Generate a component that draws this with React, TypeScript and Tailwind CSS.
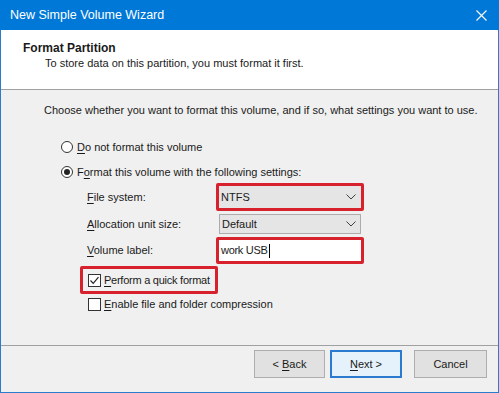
import React from "react";

const font = { fontFamily: '"Liberation Sans", Arial, sans-serif' };

function U({ children }: { children: React.ReactNode }) {
  return <span className="underline underline-offset-2 decoration-1">{children}</span>;
}

function Chevron() {
  return (
    <svg width="10" height="6" viewBox="0 0 10 6" className="shrink-0">
      <path d="M0.5 0.5 L5 5 L9.5 0.5" fill="none" stroke="#404040" strokeWidth="1" />
    </svg>
  );
}

function Radio({ checked }: { checked?: boolean }) {
  return (
    <div className="flex h-[12px] w-[12px] shrink-0 items-center justify-center rounded-full border border-[#333] bg-white">
      {checked ? <div className="h-[6px] w-[6px] rounded-full bg-[#222]" /> : null}
    </div>
  );
}

function Check({ checked }: { checked?: boolean }) {
  return (
    <div className="flex h-[13px] w-[13px] shrink-0 items-center justify-center border border-[#333] bg-white">
      {checked ? (
        <svg width="11" height="11" viewBox="0 0 11 11">
          <path d="M1.5 5.5 L4.2 8.3 L9.5 2.2" fill="none" stroke="#222" strokeWidth="1.2" />
        </svg>
      ) : null}
    </div>
  );
}

export default function App() {
  return (
    <div
      className="flex h-[393px] w-[499px] flex-col border border-t-0 border-[#2b7ccd] bg-[#f0f0f0] text-[11px] text-[#1a1a1a]"
      style={font}
    >
      {/* title bar */}
      <div className="-mx-px flex h-[30px] shrink-0 items-center justify-between bg-[#0078d7] pl-[10px] pr-[12px] text-white">
        <span className="text-[12.5px]">New Simple Volume Wizard</span>
        <svg width="11" height="11" viewBox="0 0 11 11">
          <path d="M0.5 0.5 L10.5 10.5 M10.5 0.5 L0.5 10.5" stroke="white" strokeWidth="1.1" />
        </svg>
      </div>

      {/* header */}
      <div className="flex h-[60px] shrink-0 flex-col border-b border-[#a0a0a0] bg-white pl-[22px] pt-[10px]">
        <div className="text-[12px] font-bold leading-[16px]">Format Partition</div>
        <div className="pl-[22px] leading-[15px]">To store data on this partition, you must format it first.</div>
      </div>

      {/* body */}
      <div className="flex flex-1 flex-col pl-[43px] pt-[12px]">
        <div className="leading-[16px]">
          Choose whether you want to format this volume, and if so, what settings you want to use.
        </div>

        <div className="mt-[21px] flex items-center gap-[4px] pl-[17px] leading-[16px]">
          <Radio />
          <span>
            <U>D</U>o not format this volume
          </span>
        </div>
        <div className="mt-[9px] flex items-center gap-[4px] pl-[17px] leading-[16px]">
          <Radio checked />
          <span>
            F<U>o</U>rmat this volume with the following settings:
          </span>
        </div>

        <div className="mt-[3px] grid grid-cols-[129px_148px] items-center gap-y-[3px] pl-[43px]">
          <span>
            <U>F</U>ile system:
          </span>
          <div className="h-[28px] rounded-[2px] border-[3px] border-[#d7222d]">
            <div className="flex h-full items-center justify-between bg-[#e5e5e5] pl-[2px] pr-[5px]">
              <span>NTFS</span>
              <Chevron />
            </div>
          </div>

          <span>
            <U>A</U>llocation unit size:
          </span>
          <div className="mx-[3px] flex h-[20px] items-center justify-between border border-[#acacac] bg-[#e5e5e5] pl-[2px] pr-[4px]">
            <span>Default</span>
            <Chevron />
          </div>

          <span>
            <U>V</U>olume label:
          </span>
          <div className="h-[27px] rounded-[2px] border-[3px] border-[#d7222d]">
            <div className="flex h-full items-center bg-white pl-[2px]">
              <span className="tracking-[-0.3px]">work USB</span>
              <span className="ml-[1px] h-[14px] w-px bg-black" />
            </div>
          </div>
        </div>

        <div className="mt-[2px] ml-[36px] flex h-[28px] w-[138px] items-center gap-[3px] rounded-[2px] border-[3px] border-[#d7222d] pl-[5px]">
          <Check checked />
          <span className="whitespace-nowrap tracking-[-0.25px]">
            <U>P</U>erform a quick format
          </span>
        </div>
        <div className="mt-[2px] ml-[44px] flex items-center gap-[3px] leading-[16px]">
          <Check />
          <span>
            <U>E</U>nable file and folder compression
          </span>
        </div>
      </div>

      {/* footer */}
      <div className="flex h-[47px] shrink-0 items-start justify-end gap-[5px] border-t border-[#a0a0a0] pr-[11px] pt-[4px]">
        <button className="h-[28px] w-[71px] border border-[#adadad] bg-[#e1e1e1]">
          &lt; <U>B</U>ack
        </button>
        <button className="mr-[7px] h-[28px] w-[72px] border-2 border-[#2a7ad0] bg-[#e5f1fb]">
          <U>N</U>ext &gt;
        </button>
        <button className="h-[28px] w-[73px] border border-[#adadad] bg-[#e1e1e1]">Cancel</button>
      </div>
    </div>
  );
}
